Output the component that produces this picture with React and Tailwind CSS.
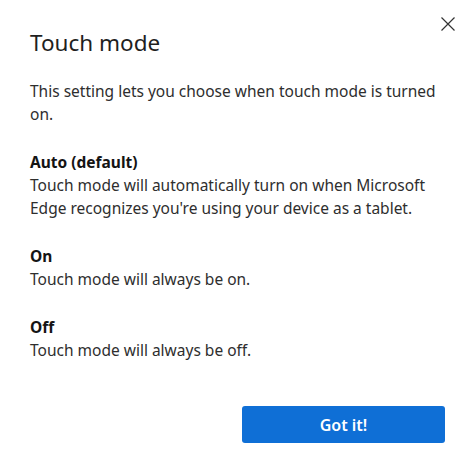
import React from "react";

const sections = [
  {
    title: "Auto (default)",
    body: "Touch mode will automatically turn on when Microsoft Edge recognizes you're using your device as a tablet.",
  },
  { title: "On", body: "Touch mode will always be on." },
  { title: "Off", body: "Touch mode will always be off." },
];

export default function App() {
  return (
    <div
      className="w-[474px] h-[474px] bg-white text-[#262626] relative"
      style={{ fontFamily: '"Noto Sans", "Open Sans", sans-serif' }}
    >
      <button className="absolute top-[14px] right-[16px] w-[20px] h-[20px] flex items-center justify-center">
        <svg width="16" height="16" viewBox="0 0 16 16" fill="none" stroke="#333" strokeWidth="1.2">
          <path d="M1.5 1.5 L14.5 14.5 M14.5 1.5 L1.5 14.5" />
        </svg>
      </button>
      <div className="flex flex-col pl-[30px] pr-[28px] pt-[28px]">
        <h1 className="text-[22.5px] leading-[30px] text-[#1f1f1f]">Touch mode</h1>
        <p className="mt-[22px] text-[15.5px] leading-[23px] text-[#2e2e2e]">
          This setting lets you choose when touch mode is turned on.
        </p>
        {sections.map((s) => (
          <div key={s.title} className="mt-[25px] flex flex-col">
            <div className="text-[15.5px] leading-[23px] font-bold text-[#141414]">{s.title}</div>
            <div className="text-[15.5px] leading-[23px] text-[#2e2e2e]">{s.body}</div>
          </div>
        ))}
        <div className="mt-[44px] flex justify-end pr-[1px]">
          <button className="w-[203px] h-[37px] rounded-[3px] bg-[#0f6fd6] text-white text-[16px] font-semibold">
            Got it!
          </button>
        </div>
      </div>
    </div>
  );
}
